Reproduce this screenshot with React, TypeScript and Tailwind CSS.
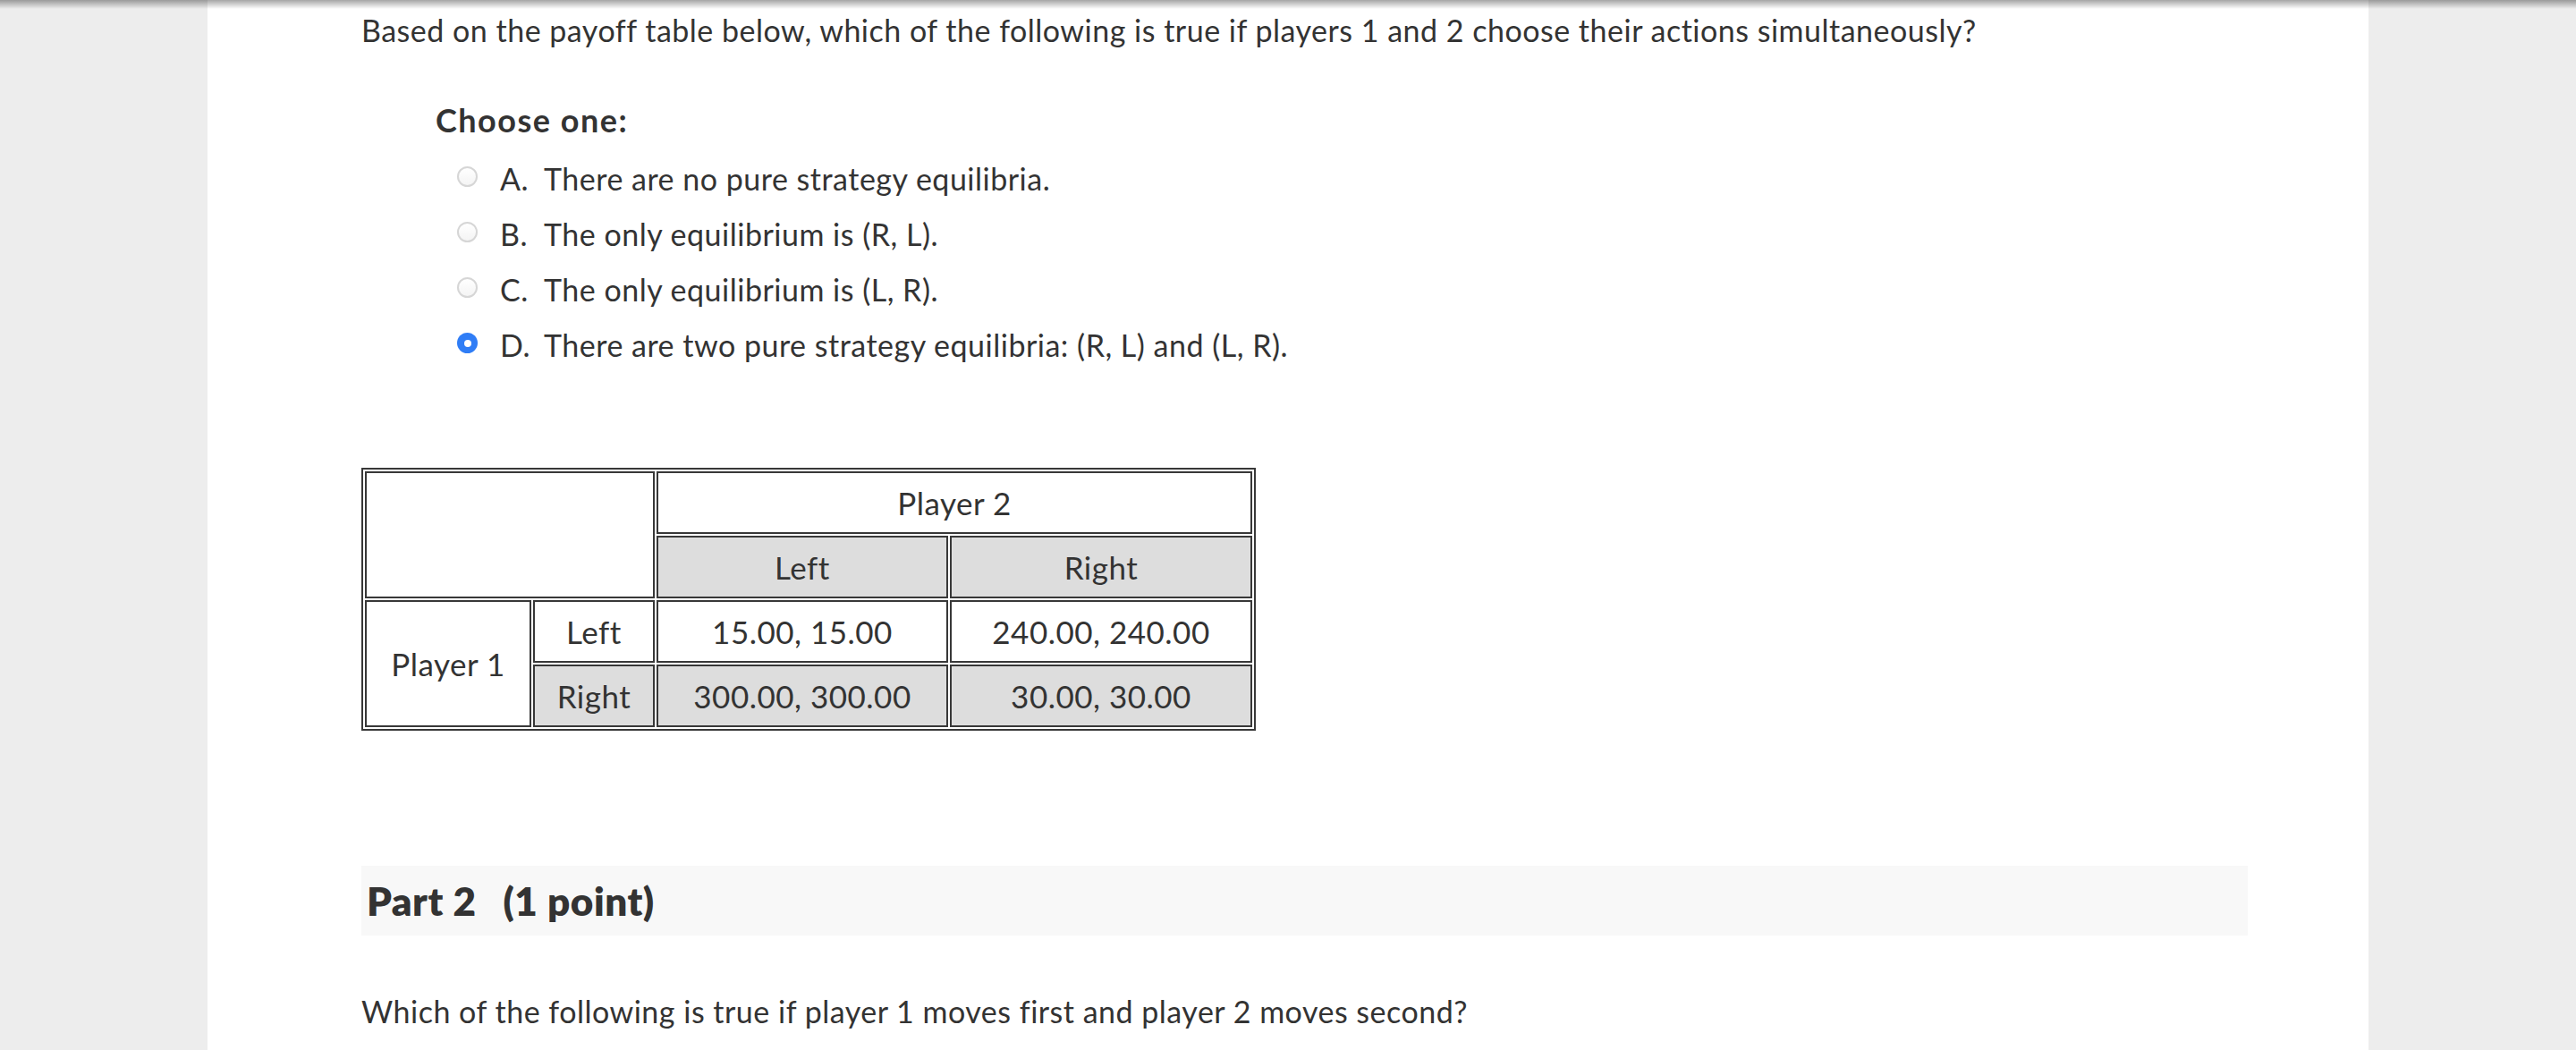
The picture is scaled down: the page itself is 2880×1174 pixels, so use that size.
import React from "react";

// Opciones de la pregunta (la D está marcada)
const options = [
  { letter: "A.", text: "There are no pure strategy equilibria.", checked: false },
  { letter: "B.", text: "The only equilibrium is (R, L).", checked: false },
  { letter: "C.", text: "The only equilibrium is (L, R).", checked: false },
  { letter: "D.", text: "There are two pure strategy equilibria: (R, L) and (L, R).", checked: true },
];

const cellBase = "border-2 border-[#383838] py-[9px] px-2 text-center align-middle";

function Radio({ checked }: { checked: boolean }) {
  if (checked) {
    return (
      <span className="mb-[5px] flex h-[23px] w-[23px] shrink-0 items-center justify-center rounded-full bg-[#2f7df6]">
        <span className="h-[8px] w-[8px] rounded-full bg-white" />
      </span>
    );
  }
  return (
    <span className="mb-[5px] h-[23px] w-[23px] shrink-0 rounded-full border-2 border-[#d6d6d6] bg-linear-to-b from-white to-[#f4f4f4]" />
  );
}

export default function App() {
  return (
    <div className="relative h-[1174px] w-full overflow-hidden bg-[#ededed] font-['Lato','Liberation_Sans',sans-serif] text-[#333] tracking-[0.5px]">
      {/* sombra de la barra superior */}
      <div className="absolute inset-x-0 top-0 h-[10px] bg-linear-to-b from-black/35 to-transparent" />

      <div className="ml-[232px] h-full w-[2416px] bg-white pl-[172px] pr-[135px] pt-[10px]">
        {/* Pregunta */}
        <p className="text-[34px] leading-[48px]">
          Based on the payoff table below, which of the following is true if players 1 and 2 choose their actions simultaneously?
        </p>

        <div className="ml-[83px] mt-[52px]">
          <h3 className="text-[36px] font-bold leading-[48px] tracking-[1.5px]">Choose one:</h3>
          <div className="mt-[11px]">
            {options.map((opt) => (
              <div key={opt.letter} className="flex h-[62px] items-center pl-[24px]">
                <Radio checked={opt.checked} />
                <span className="ml-[25px] w-[49px] text-[34px] leading-[62px]">{opt.letter}</span>
                <span className="text-[34px] leading-[62px]">{opt.text}</span>
              </div>
            ))}
          </div>
        </div>

        {/* Tabla de pagos */}
        <table className="mt-[106px] border-separate border-spacing-[2px] border-2 border-[#383838] text-[35px] leading-[48px]">
          <tbody>
            <tr>
              <td colSpan={2} rowSpan={2} className="border-2 border-[#383838] bg-white" />
              <td colSpan={2} className={`${cellBase} bg-white`}>
                Player 2
              </td>
            </tr>
            <tr>
              <td className={`${cellBase} bg-[#dddddd]`}>Left</td>
              <td className={`${cellBase} bg-[#dddddd]`}>Right</td>
            </tr>
            <tr>
              <td rowSpan={2} className={`${cellBase} w-[186px] bg-white`}>
                Player 1
              </td>
              <td className={`${cellBase} w-[136px] bg-white`}>Left</td>
              <td className={`${cellBase} w-[326px] bg-white`}>15.00, 15.00</td>
              <td className={`${cellBase} w-[338px] bg-white`}>240.00, 240.00</td>
            </tr>
            <tr>
              <td className={`${cellBase} bg-[#dddddd]`}>Right</td>
              <td className={`${cellBase} bg-[#dddddd]`}>300.00, 300.00</td>
              <td className={`${cellBase} bg-[#dddddd]`}>30.00, 30.00</td>
            </tr>
          </tbody>
        </table>

        {/* Parte 2 */}
        <div className="mt-[151px] h-[78px] bg-[#f8f8f8] pl-[6px]">
          <h2 className="text-[44px] font-extrabold leading-[78px]">
            Part 2<span className="ml-[30px]">(1 point)</span>
          </h2>
        </div>

        <p className="mt-[61px] text-[34px] leading-[48px]">
          Which of the following is true if player 1 moves first and player 2 moves second?
        </p>
      </div>
    </div>
  );
}
